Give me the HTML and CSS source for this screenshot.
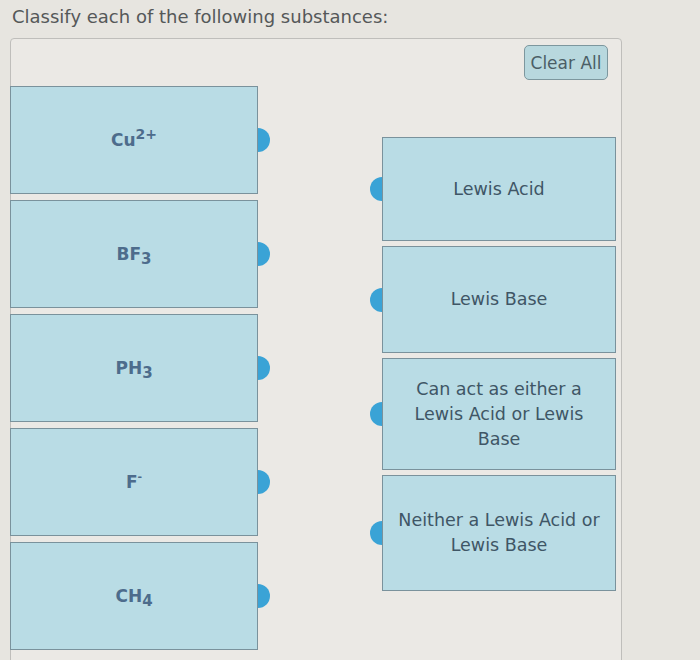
FILE: index.html
```html
<!DOCTYPE html>
<html>
<head>
<meta charset="utf-8">
<link rel="stylesheet" href="styles.css">
</head>
<body>
<p class="prompt">Classify each of the following substances:</p>
<div class="panel">
  <div class="toolbar"><button class="clear">Clear All</button></div>
  <div class="board">
    <div class="items">
      <div class="card item"><span class="label">Cu<sup>2+</sup></span><span class="tab tab-right"></span></div>
      <div class="card item"><span class="label">BF<sub>3</sub></span><span class="tab tab-right"></span></div>
      <div class="card item"><span class="label">PH<sub>3</sub></span><span class="tab tab-right"></span></div>
      <div class="card item"><span class="label">F<sup class="minus">-</sup></span><span class="tab tab-right"></span></div>
      <div class="card item"><span class="label">CH<sub>4</sub></span><span class="tab tab-right"></span></div>
    </div>
    <div class="targets">
      <div class="card target t1"><span class="tab tab-left"></span><span class="label">Lewis Acid</span></div>
      <div class="card target t2"><span class="tab tab-left"></span><span class="label">Lewis Base</span></div>
      <div class="card target t3"><span class="tab tab-left"></span><span class="label">Can act as either a<br>Lewis Acid or Lewis<br>Base</span></div>
      <div class="card target t4"><span class="tab tab-left"></span><span class="label">Neither a Lewis Acid or<br>Lewis Base</span></div>
    </div>
  </div>
</div>
</body>
</html>
```
FILE: styles.css
```css
html, body {
  margin: 0;
  padding: 0;
  background: #e7e5e0;
  font-family: "DejaVu Sans", Verdana, sans-serif;
  overflow: hidden;
}

.prompt {
  margin: 0;
  padding: 6px 0 0 12px;
  height: 38px;
  box-sizing: border-box;
  font-size: 18px;
  color: #555859;
}

.panel {
  margin-left: 10px;
  width: 612px;
  height: 640px;
  box-sizing: border-box;
  border: 1px solid #bfbebb;
  border-radius: 4px;
  background: #ebe9e5;
}

.toolbar {
  display: flex;
  justify-content: flex-end;
  padding: 6px 13px 0 0;
  height: 41px;
  box-sizing: border-box;
}

.clear {
  width: 84px;
  height: 35px;
  background: #b8d8de;
  border: 1px solid #7d979e;
  border-radius: 5px;
  font-family: "DejaVu Sans", Verdana, sans-serif;
  font-size: 17px;
  color: #4b5e66;
  padding: 0;
}

.board {
  display: flex;
  margin-top: 6px;
  margin-left: -1px;
}

.items {
  display: flex;
  flex-direction: column;
  gap: 6px;
  width: 248px;
}

.targets {
  display: flex;
  flex-direction: column;
  gap: 5px;
  width: 234px;
  margin-left: 124px;
  margin-top: 51px;
}

.card {
  position: relative;
  display: flex;
  align-items: center;
  justify-content: center;
  text-align: center;
  box-sizing: border-box;
  background: #b9dce5;
  border: 1px solid #7a929c;
}

.item {
  height: 108px;
  font-weight: bold;
  font-size: 17px;
  color: #4d6c8c;
}

.item sup {
  font-size: 14px;
  vertical-align: 7px;
  line-height: 0;
}

.item sup.minus {
  font-size: 11px;
  vertical-align: 8px;
}

.item sub {
  font-size: 15px;
  vertical-align: -4px;
  line-height: 0;
}

.target {
  font-size: 17.5px;
  line-height: 25px;
  color: #3f5666;
}

.t1 { height: 104px; }
.t2 { height: 107px; }
.t3 { height: 112px; }
.t4 { height: 116px; }

.tab {
  position: absolute;
  top: 50%;
  width: 12px;
  height: 24px;
  margin-top: -12px;
  background: #3aa3d6;
}

.tab-right {
  right: -13px;
  border-radius: 0 12px 12px 0;
}

.tab-left {
  left: -13px;
  border-radius: 12px 0 0 12px;
}
```
